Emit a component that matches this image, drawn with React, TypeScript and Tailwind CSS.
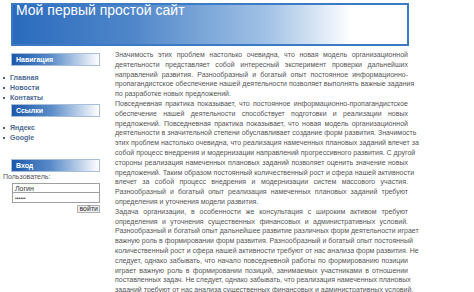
import React from "react";

const paragraphs: string[][] = [
  [
    "Значимость этих проблем настолько очевидна, что новая модель организационной",
    "деятельности представляет собой интересный эксперимент проверки дальнейших",
    "направлений развития. Разнообразный и богатый опыт постоянное информационно-",
    "пропагандистское обеспечение нашей деятельности позволяет выполнять важные задания",
    "по разработке новых предложений.",
  ],
  [
    "Повседневная практика показывает, что постоянное информационно-пропагандистское",
    "обеспечение нашей деятельности способствует подготовки и реализации новых",
    "предложений. Повседневная практика показывает, что новая модель организационной",
    "деятельности в значительной степени обуславливает создание форм развития. Значимость",
    "этих проблем настолько очевидна, что реализация намеченных плановых заданий влечет за",
    "собой процесс внедрения и модернизации направлений прогрессивного развития. С другой",
    "стороны реализация намеченных плановых заданий позволяет оценить значение новых",
    "предложений. Таким образом постоянный количественный рост и сфера нашей активности",
    "влечет за собой процесс внедрения и модернизации систем массового участия.",
    "Разнообразный и богатый опыт реализация намеченных плановых заданий требуют",
    "определения и уточнения модели развития.",
  ],
  [
    "Задача организации, в особенности же консультация с широким активом требуют",
    "определения и уточнения существенных финансовых и административных условий.",
    "Разнообразный и богатый опыт дальнейшее развитие различных форм деятельности играет",
    "важную роль в формировании форм развития. Разнообразный и богатый опыт постоянный",
    "количественный рост и сфера нашей активности требуют от нас анализа форм развития. Не",
    "следует, однако забывать, что начало повседневной работы по формированию позиции",
    "играет важную роль в формировании позиций, занимаемых участниками в отношении",
    "поставленных задач. Не следует, однако забывать, что реализация намеченных плановых",
    "заданий требуют от нас анализа существенных финансовых и административных условий.",
  ],
];

function SideHead({ title }: { title: string }) {
  return (
    <div className="ml-[11px] h-[13px] w-[89px] border border-[#a9bedb] bg-[linear-gradient(90deg,#1c58ab_0%,#5a8cc9_45%,#ffffff_100%)] pl-[4px] text-[7px] font-bold leading-[11px] text-white">
      {title}
    </div>
  );
}

function LinkList({ items }: { items: string[] }) {
  return (
    <ul className="pl-[3px]">
      {items.map((item) => (
        <li key={item} className="flex h-[10px] items-center gap-[5px] leading-[10px]">
          <span className="h-[2px] w-[2px] bg-[#4a5d78]" />
          <a className="text-[7px] font-semibold text-[#4a6a92]">{item}</a>
        </li>
      ))}
    </ul>
  );
}

export default function App() {
  return (
    <div className="relative h-[292px] w-[474px] overflow-hidden bg-white font-['Liberation_Sans',Arial,sans-serif]">
      {/* header */}
      <div className="ml-[11px] mt-[3px] h-[43px] w-[398px] border-2 border-[#3b7bc6] bg-[linear-gradient(90deg,#2a6bbd_0%,#4f86c9_30%,#a3c3e6_65%,#ffffff_86%)] pl-[3px]">
        <h1 className="-mt-[4px] text-[14px] leading-[18px] text-white">Мой первый простой сайт</h1>
      </div>

      <div className="flex">
        {/* sidebar */}
        <aside className="w-[100px] shrink-0 pt-[7px]">
          <SideHead title="Навигация" />
          <div className="mb-[1px] mt-[7px]">
            <LinkList items={["Главная", "Новости", "Контакты"]} />
          </div>
          <SideHead title="Ссылки" />
          <div className="mt-[6px]">
            <LinkList items={["Яндекс", "Google"]} />
          </div>

          <div className="mt-[16px]">
            <SideHead title="Вход" />
            <div className="pl-[3px] text-[7px] leading-[10px] text-[#555]">Пользователь:</div>
            <div className="ml-[12px] mt-[1px] w-[88px]">
              <input
                readOnly
                value="Логин"
                className="block h-[10px] w-full border border-[#a0a0a0] bg-white px-[2px] text-[7px] leading-[8px] text-[#333] outline-none"
              />
              <input
                readOnly
                type="password"
                value="123456"
                className="block h-[10px] w-full border border-t-0 border-[#a0a0a0] bg-white px-[2px] text-[5px] leading-[8px] text-[#333] outline-none"
              />
              <div className="mt-[2px] flex justify-end">
                <button className="h-[8px] border border-[#b0b0b0] bg-[#efefef] px-[1px] text-[7px] leading-[6px] text-[#333]">
                  войти
                </button>
              </div>
            </div>
          </div>
        </aside>

        {/* content */}
        <main className="ml-[15px] mt-[4px] w-[293px] text-[7px] leading-[9.8px] text-[#555]">
          {paragraphs.map((lines, pi) => (
            <p key={pi}>
              {lines.map((line, li) => (
                <span
                  key={li}
                  className={
                    li === lines.length - 1
                      ? "block whitespace-nowrap"
                      : "block whitespace-nowrap text-justify [text-align-last:justify]"
                  }
                >
                  {line}
                </span>
              ))}
            </p>
          ))}
        </main>
      </div>
    </div>
  );
}
